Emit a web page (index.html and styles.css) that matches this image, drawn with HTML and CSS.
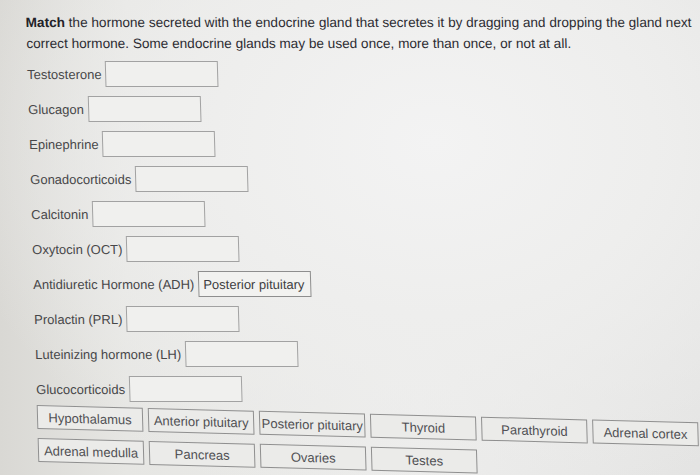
FILE: index.html
```html
<!DOCTYPE html>
<html lang="en">
<head>
<meta charset="utf-8">
<title>Match hormones to glands</title>
<link rel="stylesheet" href="styles.css">
</head>
<body>
<div class="screen">
  <div class="question">
    <p class="prompt"><b>Match</b> the hormone secreted with the endocrine gland that secretes it by dragging and dropping the gland next<br>correct hormone. Some endocrine glands may be used once, more than once, or not at all.</p>

    <div class="targets">
      <div class="row"><span class="label">Testosterone</span><span class="drop"></span></div>
      <div class="row"><span class="label">Glucagon</span><span class="drop"></span></div>
      <div class="row"><span class="label">Epinephrine</span><span class="drop"></span></div>
      <div class="row"><span class="label">Gonadocorticoids</span><span class="drop"></span></div>
      <div class="row"><span class="label">Calcitonin</span><span class="drop"></span></div>
      <div class="row"><span class="label">Oxytocin (OCT)</span><span class="drop"></span></div>
      <div class="row"><span class="label">Antidiuretic Hormone (ADH)</span><span class="drop filled">Posterior pituitary</span></div>
      <div class="row"><span class="label">Prolactin (PRL)</span><span class="drop"></span></div>
      <div class="row"><span class="label">Luteinizing hormone (LH)</span><span class="drop"></span></div>
      <div class="row"><span class="label">Glucocorticoids</span><span class="drop"></span></div>
    </div>

    <div class="bank">
      <span class="chip">Hypothalamus</span>
      <span class="chip">Anterior pituitary</span>
      <span class="chip">Posterior pituitary</span>
      <span class="chip">Thyroid</span>
      <span class="chip">Parathyroid</span>
      <span class="chip">Adrenal cortex</span>
      <span class="chip">Adrenal medulla</span>
      <span class="chip">Pancreas</span>
      <span class="chip">Ovaries</span>
      <span class="chip">Testes</span>
    </div>
  </div>
</div>
</body>
</html>
```

FILE: styles.css
```css
html, body {
  margin: 0;
  height: 100%;
  overflow: hidden;
}

body {
  font-family: "Liberation Sans", Arial, sans-serif;
  background:
    radial-gradient(ellipse 70% 80% at 62% 30%, #f3f3f3 0%, #eeeeed 45%, rgba(230, 229, 226, 0) 100%),
    linear-gradient(90deg, #d9d8d4 0%, #e6e6e3 18%, #ececeb 60%, #e4e4e3 100%);
  background-color: #e6e5e2;
}

.screen {
  height: 100%;
  position: relative;
}

.question {
  padding: 12px 0 0 25px;
  transform: skewX(1.65deg);
  transform-origin: 0 0;
}

.prompt {
  margin: 0 0 7px;
  font-size: 13.6px;
  line-height: 21px;
  color: #2c2c32;
  white-space: nowrap;
}

.prompt b {
  color: #222228;
}

.targets {
  display: flex;
  flex-direction: column;
  gap: 9px;
}

.row {
  display: flex;
  align-items: center;
  gap: 4px;
  height: 26px;
}

.label {
  font-size: 13px;
  color: #474749;
}

.drop {
  box-sizing: border-box;
  width: 113px;
  height: 26px;
  border: 1px solid #a2a2a2;
  background: #f0f0ee;
  display: flex;
  align-items: center;
  padding: 0 4px;
  font-size: 13px;
  color: #3e3e42;
}

.drop.filled {
  border-color: #8e8e8e;
  background: #f2f2f0;
}

.bank {
  margin-top: 3px;
  display: grid;
  grid-template-columns: repeat(6, 106px);
  column-gap: 5px;
  row-gap: 9px;
  transform: skewY(1.5deg);
  transform-origin: 0 0;
}

.chip {
  box-sizing: border-box;
  height: 24px;
  border: 1px solid #8f8f8f;
  background: #ebebe9;
  display: flex;
  align-items: center;
  justify-content: center;
  font-size: 13px;
  color: #505054;
  white-space: nowrap;
  overflow: hidden;
}
```
